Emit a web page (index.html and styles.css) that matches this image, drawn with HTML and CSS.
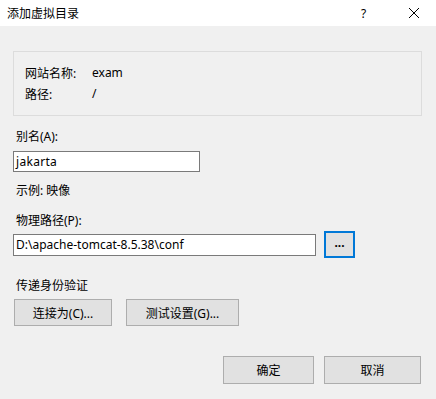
FILE: index.html
```html
<!DOCTYPE html>
<html>
<head>
    <meta charset="utf-8"/>
    <title>添加虚拟目录</title>
    <link rel="stylesheet" href="styles.css">
</head>
<body>
<div class="dialog">
    <div class="titlebar">
        <span class="title">添加虚拟目录</span>
        <span class="help">?</span>
        <span class="close">
            <svg width="12" height="12" viewBox="0 0 12 12"><path d="M1 1L11 11M11 1L1 11" stroke="#000" stroke-width="1" fill="none"/></svg>
        </span>
    </div>
    <div class="body">
        <div class="info">
            <div class="info-row"><span class="info-label">网站名称:</span><span>exam</span></div>
            <div class="info-row"><span class="info-label">路径:</span><span>/</span></div>
        </div>

        <div class="label label-alias">别名(A):</div>
        <div class="input input-alias">jakarta</div>
        <div class="label label-example">示例: 映像</div>

        <div class="label label-path">物理路径(P):</div>
        <div class="path-row">
            <div class="input input-path">D:\apache-tomcat-8.5.38\conf</div>
            <div class="btn btn-browse">...</div>
        </div>

        <div class="label label-auth">传递身份验证</div>
        <div class="auth-row">
            <div class="btn btn-connect">连接为(C)...</div>
            <div class="btn btn-test">测试设置(G)...</div>
        </div>

        <div class="footer">
            <div class="btn btn-ok">确定</div>
            <div class="btn btn-cancel">取消</div>
        </div>
    </div>
</div>
</body>
</html>
```

FILE: styles.css
```css
html, body {
    margin: 0;
    padding: 0;
}

body {
    background: #f0f0f0;
    color: #000;
    font-family: "Noto Sans", "Noto Sans CJK SC", sans-serif;
    font-size: 12px;
}

.dialog {
    width: 436px;
    height: 399px;
    overflow: hidden;
}

.titlebar {
    height: 26px;
    background: #fff;
    display: flex;
    align-items: center;
}

.title {
    margin-left: 7px;
    flex: 1;
    font-size: 12px;
}

.help {
    width: 12px;
    margin-right: 35px;
    font-size: 12px;
}

.close {
    width: 12px;
    height: 12px;
    margin-right: 16px;
    display: flex;
}

.body {
    padding: 0 14px 0 13px;
}

.info {
    margin-top: 25px;
    height: 65px;
    border: 1px solid #dcdcdc;
    padding: 10px 0 0 11px;
    box-sizing: border-box;
}

.info-row {
    display: flex;
    height: 21px;
    align-items: center;
}

.info-label {
    width: 67px;
}

.label {
    height: 16px;
    line-height: 16px;
    padding-left: 3px;
}

.label-alias {
    margin-top: 13px;
}

.input {
    background: #fff;
    border: 1px solid #7a7a7a;
    height: 21px;
    box-sizing: border-box;
    line-height: 19px;
    padding-left: 2px;
    white-space: nowrap;
}

.input-alias {
    width: 187px;
    margin-top: 6px;
    letter-spacing: 0.3px;
}

.label-example {
    margin-top: 11px;
}

.label-path {
    margin-top: 14px;
}

.path-row {
    display: flex;
    align-items: center;
    margin-top: 2px;
    height: 27px;
}

.input-path {
    width: 303px;
    height: 22px;
    line-height: 20px;
}

.btn {
    background: #e1e1e1;
    border: 1px solid #adadad;
    box-sizing: border-box;
    display: flex;
    align-items: center;
    justify-content: center;
}

.btn-browse {
    width: 31px;
    height: 27px;
    margin-left: 8px;
    border: 2px solid #0078d7;
    font-weight: bold;
    padding-bottom: 4px;
}

.label-auth {
    margin-top: 20px;
    padding-left: 3px;
}

.auth-row {
    display: flex;
    margin-top: 5px;
}

.btn-connect {
    width: 98px;
    height: 27px;
    margin-left: 1px;
}

.btn-test {
    width: 113px;
    height: 27px;
    margin-left: 14px;
}

.footer {
    display: flex;
    justify-content: flex-end;
    margin-top: 30px;
}

.btn-ok {
    width: 91px;
    height: 28px;
}

.btn-cancel {
    width: 97px;
    height: 28px;
    margin-left: 10px;
    margin-right: 1px;
}
```
